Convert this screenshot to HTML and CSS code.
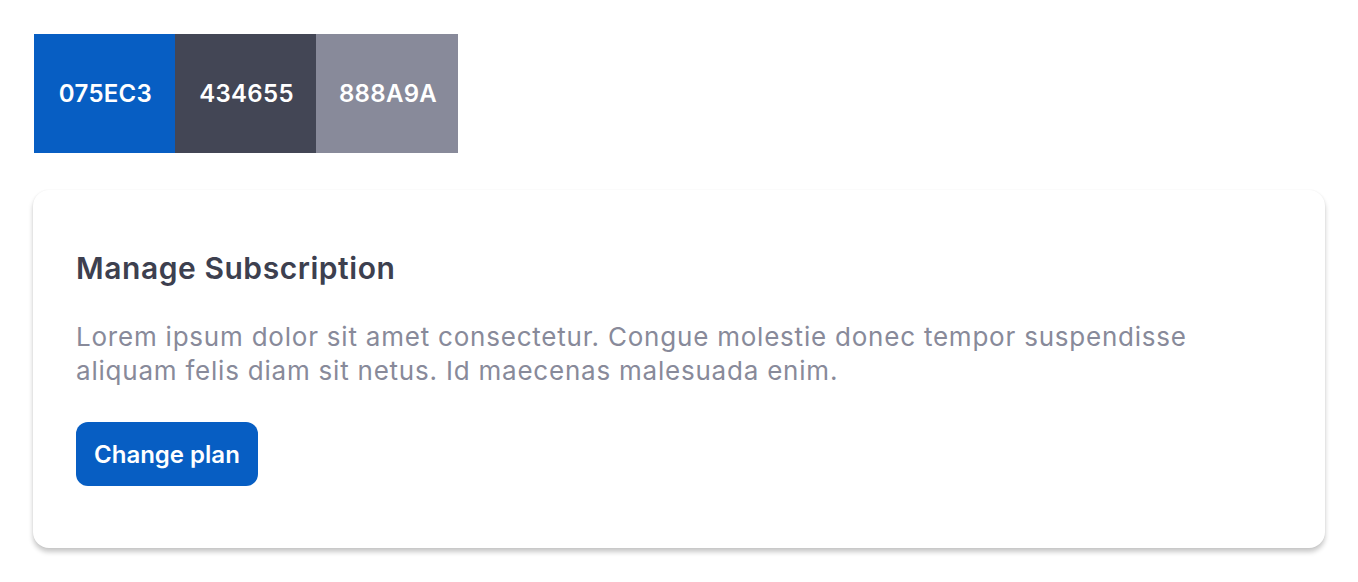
FILE: index.html
```html
<!DOCTYPE html>
<html lang="en">
<head>
    <meta charset="UTF-8">
    <meta name="viewport" content="width=device-width, initial-scale=1.0">
    <title>Manage Subscription</title>
    <link rel="stylesheet" href="styles.css">
</head>
<body>
    <!-- Palette -->
    <div class="palette">
        <div class="swatch swatch-blue">075EC3</div>
        <div class="swatch swatch-dark">434655</div>
        <div class="swatch swatch-grey">888A9A</div>
    </div>

    <!-- Subscription card -->
    <div class="card">
        <h2>Manage Subscription</h2>
        <p>Lorem ipsum dolor sit amet consectetur. Congue molestie donec tempor suspendisse aliquam felis diam sit netus. Id maecenas malesuada enim.</p>
        <button class="btn">Change plan</button>
    </div>
</body>
</html>
```

FILE: styles.css
```css
* {
    box-sizing: border-box;
    margin: 0;
    padding: 0;
}

body {
    font-family: Inter, 'Noto Sans', Arial, sans-serif;
    background: #ffffff;
    padding: 34px 33px;
}

.palette {
    display: flex;
    margin-left: 1px;
    margin-bottom: 37px;
}

.swatch {
    width: 141px;
    height: 119px;
    display: flex;
    align-items: center;
    justify-content: center;
    color: white;
    font-size: 24px;
    font-weight: 600;
    letter-spacing: 0.3px;
    padding-left: 2px;
}

.swatch-blue {
    background: #075EC3;
}

.swatch-dark {
    background: #434655;
}

.swatch-grey {
    background: #888A9A;
    width: 142px;
}

.card {
    width: 1292px;
    background: white;
    border-radius: 16px;
    padding: 60px 43px 62px;
    box-shadow: 0 4px 5px rgba(0,0,0,0.22), 0 0 2px rgba(0,0,0,0.06);
}

h2 {
    font-size: 30px;
    line-height: 36px;
    font-weight: 600;
    letter-spacing: 0.55px;
    color: #3d404f;
    margin-bottom: 34px;
}

p {
    font-size: 26px;
    line-height: 34px;
    letter-spacing: 0.78px;
    color: #888A9A;
    max-width: 1140px;
    margin-bottom: 34px;
}

.btn {
    display: block;
    background: #075EC3;
    color: white;
    border: none;
    border-radius: 12px;
    font-family: inherit;
    font-size: 24px;
    font-weight: 600;
    height: 64px;
    padding: 0 18px;
    cursor: pointer;
}
```
